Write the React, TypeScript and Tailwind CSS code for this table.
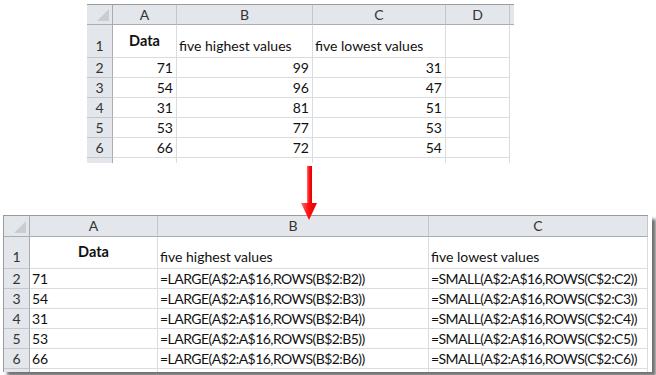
import * as React from "react";

const font = { fontFamily: "Lato, 'Open Sans', sans-serif" };

// ── Top sheet (values) ───────────────────────────────────────────────────────
const topRows: [string, string, string][] = [
    ["71", "99", "31"],
    ["54", "96", "47"],
    ["31", "81", "51"],
    ["53", "77", "53"],
    ["66", "72", "54"],
];

// ── Bottom sheet (formulas) ──────────────────────────────────────────────────
const bottomRows: [string, string, string][] = [2, 3, 4, 5, 6].map((n, i) => [
    ["71", "54", "31", "53", "66"][i],
    `=LARGE(A$2:A$16,ROWS(B$2:B${n}))`,
    `=SMALL(A$2:A$16,ROWS(C$2:C${n}))`,
]);

const hdr = "bg-[#e3e6ea] border-r border-b border-r-[#c3c7cc] border-b-[#a9adb3] flex items-center justify-center text-[#333]";
const rowHdr = "bg-[#e3e6ea] border-r border-b border-r-[#a9adb3] border-b-[#c3c7cc] flex justify-center text-[#333]";
const cell = "border-r border-b border-[#dadcdd] bg-white flex whitespace-nowrap overflow-hidden text-[#111]";

function Corner() {
    return (
        <div className="bg-[#e3e6ea] border-r border-b border-r-[#a9adb3] border-b-[#a9adb3] relative">
            <div className="absolute right-[3px] bottom-[3px] w-0 h-0 border-l-[12px] border-l-transparent border-b-[12px] border-b-[#c9ccd0]" />
        </div>
    );
}

function TopSheet() {
    return (
        <div className="ml-[87px] mt-[4px] w-fit border-t border-t-[#9a9a9a]">
            <div className="grid grid-cols-[26px_64px_136px_133px_64px_4px] grid-rows-[20px_33px_20px_20px_20px_20px_20px_5px] text-[14px] leading-none">
                <Corner />
                <div className={hdr}>A</div>
                <div className={hdr}>B</div>
                <div className={hdr}>C</div>
                <div className={hdr}>D</div>
                <div className="bg-[#e3e6ea] border-b border-b-[#a9adb3]" />

                <div className={`${rowHdr} items-end pb-[4px]`}>1</div>
                <div className={`${cell} items-center justify-center font-bold text-[14.5px]`}>Data</div>
                <div className={`${cell} items-end pl-[2px] pb-[4px]`}>five highest values</div>
                <div className={`${cell} items-end pl-[2px] pb-[4px]`}>five lowest values</div>
                <div className={cell} />
                <div />

                {topRows.map((r, i) => (
                    <React.Fragment key={i}>
                        <div className={`${rowHdr} items-center`}>{i + 2}</div>
                        <div className={`${cell} items-center justify-end pr-[3px]`}>{r[0]}</div>
                        <div className={`${cell} items-center justify-end pr-[3px]`}>{r[1]}</div>
                        <div className={`${cell} items-center justify-end pr-[3px]`}>{r[2]}</div>
                        <div className={cell} />
                        <div />
                    </React.Fragment>
                ))}

                <div className="bg-[#e3e6ea] border-r border-r-[#a9adb3]" />
                <div className="border-r border-[#dadcdd]" />
                <div className="border-r border-[#dadcdd]" />
                <div className="border-r border-[#dadcdd]" />
                <div className="border-r border-[#dadcdd]" />
                <div />
            </div>
        </div>
    );
}

function BottomSheet() {
    return (
        <div className="ml-[3px] mt-[52px] w-fit bg-white pr-[4px] shadow-[4px_4px_3px_rgba(0,0,0,0.55)]">
            <div className="border-t border-l border-t-[#9a9a9a] border-l-[#9a9a9a] grid grid-cols-[26px_128px_271px_219px] grid-rows-[21px_32px_20px_20px_20px_20px_20px_3px] text-[14px] leading-none">
                <Corner />
                <div className={hdr}>A</div>
                <div className={hdr}>B</div>
                <div className={hdr}>C</div>

                <div className={`${rowHdr} items-end pb-[4px]`}>1</div>
                <div className={`${cell} items-center justify-center font-bold text-[14.5px]`}>Data</div>
                <div className={`${cell} items-end pl-[2px] pb-[4px]`}>five highest values</div>
                <div className={`${cell} items-end pl-[2px] pb-[4px]`}>five lowest values</div>

                {bottomRows.map((r, i) => (
                    <React.Fragment key={i}>
                        <div className={`${rowHdr} items-center`}>{i + 2}</div>
                        <div className={`${cell} items-center pl-[2px]`}>{r[0]}</div>
                        <div className={`${cell} items-center pl-[2px] tracking-[-0.55px]`}>{r[1]}</div>
                        <div className={`${cell} items-center pl-[2px] tracking-[-0.55px]`}>{r[2]}</div>
                    </React.Fragment>
                ))}

                <div className="bg-[#e3e6ea] border-r border-r-[#a9adb3]" />
                <div className="border-r border-[#dadcdd]" />
                <div className="border-r border-[#dadcdd]" />
                <div className="border-r border-[#dadcdd]" />
            </div>
        </div>
    );
}

function DownArrow() {
    return (
        <svg className="absolute left-[299px] top-[164px]" width="20" height="58" viewBox="0 0 20 58">
            <defs>
                <linearGradient id="arr" x1="0" y1="0" x2="1" y2="0">
                    <stop offset="0" stopColor="#ff7070" />
                    <stop offset="0.45" stopColor="#ff1010" />
                    <stop offset="1" stopColor="#e00000" />
                </linearGradient>
            </defs>
            <rect x="8" y="2" width="5" height="38" fill="url(#arr)" />
            <polygon points="2,39 18,39 10,56" fill="url(#arr)" />
        </svg>
    );
}

export default function App() {
    return (
        <div className="relative w-[656px] h-[375px] bg-white overflow-hidden" style={font}>
            <TopSheet />
            <BottomSheet />
            <DownArrow />
        </div>
    );
}
